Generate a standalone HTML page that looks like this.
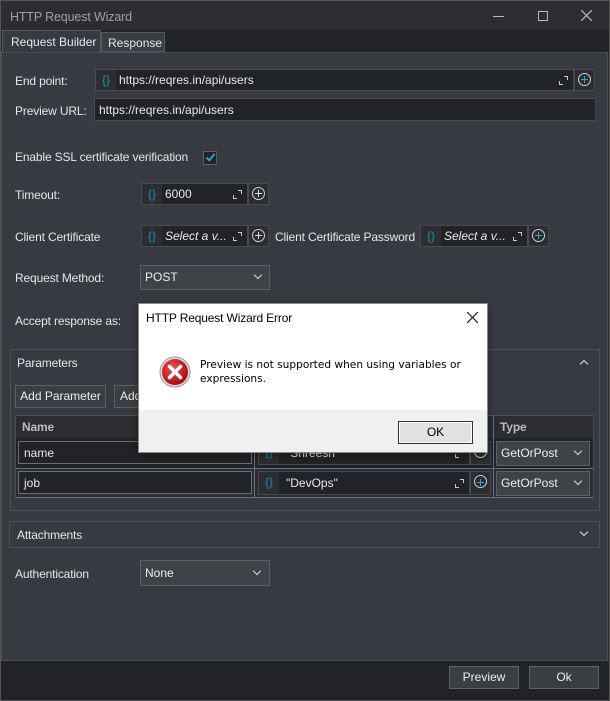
<!DOCTYPE html>
<html><head><style>
*{box-sizing:border-box;margin:0;padding:0}
body{width:610px;height:701px;background:#2b2d31;font-family:"Liberation Sans",sans-serif;font-size:12px;color:#e8e8e8;position:relative;overflow:hidden}
.a{position:absolute}
.lbl{position:absolute;font-size:12px;color:#e6e6e6;line-height:14px;letter-spacing:-0.15px}
.inp{position:absolute;background:#222326;border:1px solid #47494e}
.br{position:absolute;left:0;top:0;bottom:0;width:20px;background:#2b2d31;color:#1e8fb0;text-align:center;line-height:20px;font-size:12px}
.plus{position:absolute;width:21px;background:#2b2d31;border:1px solid #47494e}
.plus:after{content:"";position:absolute;left:3px;top:3px;width:11px;height:11px;border:1px solid #cfcfcf;border-radius:50%}
.plus i,.plus b{position:absolute;background:#ddd}
.plus.blue i,.plus.blue b{background:#29a6cf}
.exp{position:absolute;width:9px;height:9px}
.exp:before{content:"";position:absolute;left:0;bottom:0;width:3px;height:3px;border-left:1px solid #ccc;border-bottom:1px solid #ccc}
.exp:after{content:"";position:absolute;right:0;top:0;width:3px;height:3px;border-right:1px solid #ccc;border-top:1px solid #ccc}
.sel{position:absolute;background:#3f4247;border:1px solid #5c5f64;padding-left:4px;line-height:22px;color:#eee}
.chev{position:absolute;width:6px;height:6px;border-right:1px solid #ddd;border-bottom:1px solid #ddd;transform:rotate(45deg)}
.btn{position:absolute;background:#3a3d42;border:1px solid #5c5f64;text-align:center;color:#eee}
</style></head><body>
<div class="a" style="left:0;top:0;width:610px;height:701px;border:1px solid #555"></div>
<div class="lbl" style="left:10px;top:10px;color:#a0a0a0;font-size:12.5px">HTTP Request Wizard</div>
<div class="a" style="left:493px;top:16px;width:11px;height:1px;background:#bbb"></div>
<div class="a" style="left:538px;top:11px;width:10px;height:10px;border:1px solid #bbb"></div>
<svg class="a" style="left:581px;top:10px" width="11" height="11"><path d="M0 0L11 11M11 0L0 11" stroke="#bbb" stroke-width="1.2"/></svg>
<div class="a" style="left:1px;top:30px;width:608px;height:22px;background:#222326"></div>
<div class="a" style="left:2px;top:30px;width:99px;height:23px;background:#373a40;border:1px solid #55585d;border-bottom:none;padding:4px 0 0 8px;font-size:12px">Request Builder</div>
<div class="a" style="left:101px;top:32px;width:64px;height:20px;background:#3a3d42;border:1px solid #55585d;padding:3px 0 0 6px">Response</div>
<div class="a" style="left:1px;top:52px;width:607px;height:609px;background:#373a40;border:1px solid #4a4d52"></div>

<div class="lbl" style="left:15px;top:74px">End point:</div>
<div class="inp" style="left:95px;top:69px;width:479px;height:22px"><div class="br">{}</div><span class="a" style="left:23px;top:3px">https://reqres.in/api/users</span><div class="exp" style="left:463px;top:6px"></div></div>
<div class="plus blue" style="left:574px;top:69px;height:22px"><i style="left:6px;top:9px;width:7px;height:1px"></i><b style="left:9px;top:6px;width:1px;height:7px"></b></div>
<div class="lbl" style="left:15px;top:104px">Preview URL:</div>
<div class="inp" style="left:94px;top:98px;width:502px;height:23px"><span class="a" style="left:4px;top:4px">https://reqres.in/api/users</span></div>

<div class="lbl" style="left:15px;top:150px">Enable SSL certificate verification</div>
<div class="a" style="left:203px;top:151px;width:14px;height:14px;background:#222326;border:1px solid #5c5f64"></div>
<div class="a" style="left:208px;top:152px;width:5px;height:9px;border-right:2px solid #29a6cf;border-bottom:2px solid #29a6cf;transform:rotate(40deg)"></div>

<div class="lbl" style="left:15px;top:188px">Timeout:</div>
<div class="inp" style="left:141px;top:183px;width:107px;height:22px"><div class="br">{}</div><span class="a" style="left:23px;top:3px">6000</span><div class="exp" style="left:91px;top:6px"></div></div>
<div class="plus" style="left:248px;top:183px;height:22px"><i style="left:6px;top:9px;width:7px;height:1px"></i><b style="left:9px;top:6px;width:1px;height:7px"></b></div>

<div class="lbl" style="left:15px;top:230px">Client Certificate</div>
<div class="inp" style="left:141px;top:225px;width:107px;height:22px"><div class="br">{}</div><span class="a" style="left:23px;top:3px;font-style:italic">Select a v...</span><div class="exp" style="left:91px;top:6px"></div></div>
<div class="plus" style="left:248px;top:225px;height:22px"><i style="left:6px;top:9px;width:7px;height:1px"></i><b style="left:9px;top:6px;width:1px;height:7px"></b></div>
<div class="lbl" style="left:275px;top:230px">Client Certificate Password</div>
<div class="inp" style="left:420px;top:225px;width:108px;height:22px"><div class="br">{}</div><span class="a" style="left:23px;top:3px;font-style:italic">Select a v...</span><div class="exp" style="left:92px;top:6px"></div></div>
<div class="plus blue" style="left:528px;top:225px;height:22px"><i style="left:6px;top:9px;width:7px;height:1px"></i><b style="left:9px;top:6px;width:1px;height:7px"></b></div>

<div class="lbl" style="left:15px;top:271px">Request Method:</div>
<div class="sel" style="left:140px;top:265px;width:130px;height:25px">POST<div class="chev" style="left:114px;top:6px"></div></div>
<div class="lbl" style="left:15px;top:314px">Accept response as:</div>

<div class="a" style="left:10px;top:349px;width:590px;height:162px;border:1px solid #4d5055"></div>
<div class="lbl" style="left:17px;top:356px">Parameters</div>
<div class="chev" style="left:581px;top:361px;transform:rotate(225deg)"></div>
<div class="btn" style="left:15px;top:385px;width:91px;height:23px;line-height:21px">Add Parameter</div>
<div class="btn" style="left:114px;top:385px;width:60px;height:23px;line-height:21px;text-align:left;padding-left:5px">Add</div>
<div class="a" style="left:15px;top:415px;width:579px;height:83px;background:#2b2d31;border:1px solid #4d5055"></div>
<div class="lbl" style="left:22px;top:420px;font-weight:bold;color:#bbb">Name</div>
<div class="lbl" style="left:500px;top:420px;font-weight:bold;color:#bbb">Type</div>
<div class="a" style="left:16px;top:438px;width:577px;height:30px;background:#222326"></div>
<div class="a" style="left:16px;top:468px;width:577px;height:1px;background:#5a7590"></div>
<div class="a" style="left:16px;top:497px;width:577px;height:1px;background:#5a7590"></div>
<div class="a" style="left:254px;top:438px;width:1px;height:60px;background:#5a7590"></div>
<div class="a" style="left:493px;top:415px;width:1px;height:83px;background:#5a7590"></div>
<div class="inp" style="left:18px;top:441px;width:234px;height:23px;border-color:#6a6d72;padding:4px 0 0 5px">name</div>
<div class="inp" style="left:258px;top:441px;width:212px;height:24px"><div class="br">{}</div><span class="a" style="left:27px;top:4px">"Shreesh"</span><div class="exp" style="left:196px;top:7px"></div></div>
<div class="plus" style="left:470px;top:441px;height:24px"></div>
<div class="inp" style="left:18px;top:471px;width:234px;height:23px;border-color:#6a6d72;padding:4px 0 0 5px">job</div>
<div class="inp" style="left:258px;top:471px;width:212px;height:24px"><div class="br">{}</div><span class="a" style="left:27px;top:4px">"DevOps"</span><div class="exp" style="left:196px;top:7px"></div></div>
<div class="plus blue" style="left:470px;top:471px;height:24px"><i style="left:6px;top:10px;width:7px;height:1px"></i><b style="left:9px;top:7px;width:1px;height:7px"></b></div>
<div class="sel" style="left:496px;top:441px;width:94px;height:25px">GetOrPost<div class="chev" style="left:78px;top:6px"></div></div>
<div class="sel" style="left:496px;top:471px;width:94px;height:25px">GetOrPost<div class="chev" style="left:78px;top:6px"></div></div>

<div class="a" style="left:9px;top:521px;width:591px;height:27px;border:1px solid #4d5055"></div>
<div class="lbl" style="left:17px;top:528px">Attachments</div>
<div class="chev" style="left:581px;top:529px"></div>
<div class="lbl" style="left:15px;top:567px">Authentication</div>
<div class="sel" style="left:140px;top:560px;width:130px;height:26px;line-height:24px">None<div class="chev" style="left:113px;top:7px"></div></div>

<div class="a" style="left:1px;top:661px;width:608px;height:39px;background:#222326"></div>
<div class="btn" style="left:449px;top:666px;width:70px;height:23px;line-height:21px">Preview</div>
<div class="btn" style="left:529px;top:666px;width:70px;height:23px;line-height:21px">Ok</div>

<div class="a" style="left:138px;top:303px;width:350px;height:150px;background:#fff;border:1px solid #888;box-shadow:0 2px 8px rgba(0,0,0,.4)"></div>
<div class="a" style="left:139px;top:410px;width:348px;height:42px;background:#f0f0f0"></div>
<div class="lbl" style="left:146px;top:311px;color:#000">HTTP Request Wizard Error</div>
<svg class="a" style="left:467px;top:312px" width="11" height="11"><path d="M0 0L11 11M11 0L0 11" stroke="#222" stroke-width="1.2"/></svg>
<svg class="a" style="left:159px;top:356px" width="32" height="32" viewBox="0 0 32 32"><defs><radialGradient id="g" cx="40%" cy="35%" r="65%"><stop offset="0" stop-color="#f05050"/><stop offset="1" stop-color="#a80d0d"/></radialGradient></defs><circle cx="16" cy="16" r="15" fill="#ddd" stroke="#999"/><circle cx="16" cy="16" r="13" fill="url(#g)"/><path d="M10.5 10.5L21.5 21.5M21.5 10.5L10.5 21.5" stroke="#fff" stroke-width="3.5" stroke-linecap="round"/></svg>
<div class="a" style="left:200px;top:359px;color:#000;font-family:'DejaVu Sans',sans-serif;font-size:10.6px;line-height:13.5px;width:265px">Preview is not supported when using variables or expressions.</div>
<div class="a" style="left:398px;top:421px;width:75px;height:23px;background:#e1e1e1;border:1px solid #333;box-shadow:inset 0 0 0 1px #fff;text-align:center;line-height:21px;color:#000">OK</div>
</body></html>
